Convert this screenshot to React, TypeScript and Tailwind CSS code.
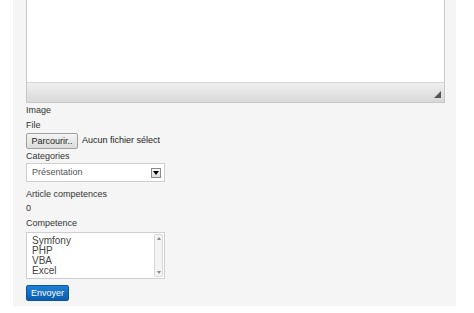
import React from 'react';

const competences = ['Symfony', 'PHP', 'VBA', 'Excel'];

export default function App() {
  return (
    <div className="w-[474px] h-[313px] bg-white overflow-hidden font-['Liberation_Sans',Arial,sans-serif] text-[9px] text-[#333]">
      <div className="ml-[13px] w-[443px] h-[306px] bg-[#f5f5f5] pl-[13px] pr-[11px] flex flex-col">
        {/* editor area */}
        <div className="h-[103px] border border-t-0 border-[#c8c8c8] flex flex-col">
          <div className="flex-1 bg-white" />
          <div className="h-[20px] border-t border-[#d6d6d6] bg-gradient-to-b from-[#efefef] to-[#d9d9d9] flex items-end justify-end pr-[3px] pb-[4px]">
            <svg width="7" height="7" viewBox="0 0 7 7">
              <path d="M7 0 L7 7 L0 7 Z" fill="#555" />
            </svg>
          </div>
        </div>

        <div className="h-[15px] leading-[15px]">Image</div>
        <div className="h-[15px] leading-[15px]">File</div>
        <div className="flex items-center h-[16px]">
          <button className="h-[16px] w-[52px] border border-[#a0a0a0] rounded-[2px] bg-gradient-to-b from-[#f4f4f4] to-[#dcdcdc] text-[9px] text-[#222] leading-none">
            Parcourir..
          </button>
          <span className="ml-[4px] w-[78px] overflow-hidden whitespace-nowrap text-[#222]">Aucun fichier sélectionné</span>
        </div>
        <div className="h-[14px] leading-[14px]">Categories</div>
        <div className="w-[139px] h-[19px] bg-white border border-[#cfcfcf] flex items-center justify-between pl-[5px] pr-[3px]">
          <span className="text-[#555]">Présentation</span>
          <div className="w-[10px] h-[10px] border border-[#8a8a8a] bg-gradient-to-b from-[#f8f8f8] to-[#dedede] flex items-center justify-center">
            <svg width="6" height="4" viewBox="0 0 6 4">
              <path d="M0 0 H6 L3 4 Z" fill="#000" />
            </svg>
          </div>
        </div>
        <div className="h-[14px] leading-[14px] mt-[5px]">Article competences</div>
        <div className="h-[14px] leading-[14px]">0</div>
        <div className="h-[15px] leading-[15px] mt-[1px]">Competence</div>
        <div className="w-[139px] h-[47px] mt-[1px] bg-white border border-[#cfcfcf] flex">
          <div className="flex-1 pl-[5px] pt-[3px] flex flex-col text-[#444] leading-[10px] text-[10px]">
            {competences.map((c) => (
              <span key={c}>{c}</span>
            ))}
          </div>
          <div className="w-[9px] my-[1px] mr-[1px] border border-[#d8d8d8] rounded-[2px] bg-[#f4f4f4] flex flex-col justify-between items-center py-[2px]">
            <svg width="4" height="3" viewBox="0 0 4 3">
              <path d="M0 3 L2 0 L4 3 Z" fill="#888" />
            </svg>
            <svg width="4" height="3" viewBox="0 0 4 3">
              <path d="M0 0 H4 L2 3 Z" fill="#888" />
            </svg>
          </div>
        </div>
        <button className="mt-[6px] w-[43px] h-[16px] rounded-[2px] bg-gradient-to-b from-[#1f80d4] to-[#0b5cad] border border-[#0a55a0] text-white text-[9px] leading-none">
          Envoyer
        </button>
      </div>
    </div>
  );
}
